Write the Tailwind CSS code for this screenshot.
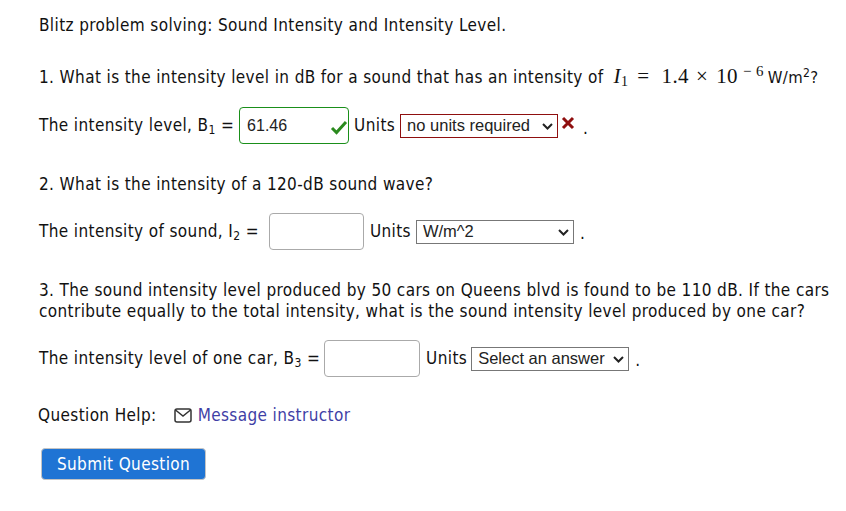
<!DOCTYPE html>
<html lang="en">
  <head>
    <meta charset="UTF-8" />
    <script src="https://cdn.jsdelivr.net/npm/@tailwindcss/browser@4"></script>
    <title>Blitz problem solving</title>
  </head>
  <body class="bg-white text-[#111] font-['DejaVu_Sans',sans-serif] font-stretch-condensed text-[17px] leading-[21px] tracking-[0.38px]">
    <div class="w-[846px] h-[511px] overflow-hidden pl-[39px] pt-[15px]">
      <p>Blitz problem solving: Sound Intensity and Intensity Level.</p>

      <!-- Question 1 -->
      <div class="mt-[30px] h-[21px] flex items-baseline whitespace-nowrap">
        <span>1. What is the intensity level in dB for a sound that has an intensity of</span>
        <span class="ml-[10px] font-['Liberation_Serif',serif] text-[21px] italic">I</span>
        <span class="font-['Liberation_Serif',serif] text-[14px] relative top-[3px]">1</span>
        <span class="ml-[9px] font-['Liberation_Serif',serif] text-[21px]">=</span>
        <span class="ml-[12px] font-['Liberation_Serif',serif] text-[21px]">1.4</span>
        <span class="ml-[7px] font-['Liberation_Serif',serif] text-[21px]">×</span>
        <span class="ml-[8px] font-['Liberation_Serif',serif] text-[21px]">10</span>
        <span class="ml-[5px] font-['Liberation_Serif',serif] text-[15px] relative -top-[7px]">− 6</span>
        <span class="ml-[4px] text-[16.5px]">W/m<sup class="text-[12px]">2</sup>?</span>
      </div>
      <div class="mt-[20px] h-[37px] flex items-center whitespace-nowrap">
        <span>The intensity level, B<sub class="text-[12px]">1</sub> =</span>
        <div class="relative ml-[5px]">
          <input value="61.46" class="w-[110px] h-[37px] border border-[#1a8f1a] rounded-[4px] pl-[7px] text-[16px] tracking-normal font-['Liberation_Sans',sans-serif] text-[#222]" />
          <svg class="absolute right-[1px] top-[12px] w-[18px] h-[16px]" viewBox="0 0 18 16"><path d="M2 9l4.500 4.500L16 3" fill="none" stroke="#2b8a1e" stroke-width="3" /></svg>
        </div>
        <span class="ml-[5px]">Units</span>
        <div class="relative ml-[5px]">
          <select class="appearance-none block w-[158px] h-[24px] border border-[#8f0f0f] pl-[6px] text-[16.5px] tracking-normal font-['Liberation_Sans',sans-serif] text-[#222]"><option>no units required</option></select>
          <svg class="absolute right-[5px] top-[9px] w-[11px] h-[7px]" viewBox="0 0 11 7"><path d="M1 1l4.500 4.500L10 1" fill="none" stroke="#222" stroke-width="2" /></svg>
        </div>
        <svg class="ml-[3px] -mt-[6px] w-[14px] h-[14px]" viewBox="0 0 14 14"><path d="M2 2l10 10M12 2L2 12" fill="none" stroke="#8f0f0f" stroke-width="3" /></svg>
        <span class="ml-[8px] mt-[5px]">.</span>
      </div>

      <!-- Question 2 -->
      <p class="mt-[30px]">2. What is the intensity of a 120-dB sound wave?</p>
      <div class="mt-[18px] h-[37px] flex items-center whitespace-nowrap">
        <span>The intensity of sound, I<sub class="text-[12px]">2</sub> =</span>
        <input class="ml-[10px] w-[95px] h-[37px] border border-[#aaa] rounded-[4px]" />
        <span class="ml-[6px]">Units</span>
        <div class="relative ml-[5px]">
          <select class="appearance-none block w-[158px] h-[24px] border border-[#777] pl-[6px] text-[16.5px] tracking-normal font-['Liberation_Sans',sans-serif] text-[#222]"><option>W/m^2</option></select>
          <svg class="absolute right-[5px] top-[9px] w-[11px] h-[7px]" viewBox="0 0 11 7"><path d="M1 1l4.500 4.500L10 1" fill="none" stroke="#222" stroke-width="2" /></svg>
        </div>
        <span class="ml-[6px] mt-[3px]">.</span>
      </div>

      <!-- Question 3 -->
      <p class="mt-[30px] whitespace-nowrap">3. The sound intensity level produced by 50 cars on Queens blvd is found to be 110 dB. If the cars<br />contribute equally to the total intensity, what is the sound intensity level produced by one car?</p>
      <div class="mt-[18px] h-[37px] flex items-center whitespace-nowrap">
        <span>The intensity level of one car, B<sub class="text-[12px]">3</sub> =</span>
        <input class="ml-[4px] w-[96px] h-[37px] border border-[#aaa] rounded-[4px]" />
        <span class="ml-[6px]">Units</span>
        <div class="relative ml-[4px]">
          <select class="appearance-none block w-[158px] h-[24px] border border-[#777] pl-[6px] text-[16.5px] tracking-normal font-['Liberation_Sans',sans-serif] text-[#222]"><option>Select an answer</option></select>
          <svg class="absolute right-[5px] top-[9px] w-[11px] h-[7px]" viewBox="0 0 11 7"><path d="M1 1l4.500 4.500L10 1" fill="none" stroke="#222" stroke-width="2" /></svg>
        </div>
        <span class="ml-[6px] mt-[3px]">.</span>
      </div>

      <!-- Help -->
      <div class="mt-[28px] -ml-[1px] flex items-center">
        <span>Question Help:</span>
        <svg class="ml-[17px] w-[18px] h-[15px]" viewBox="0 0 18 15"><rect x="1" y="1" width="16" height="13" rx="2" fill="none" stroke="#333" stroke-width="1.500" /><path d="M1.500 2l7.500 6 7.500-6" fill="none" stroke="#333" stroke-width="1.500" /></svg>
        <a class="ml-[6px] text-[#3f3fa6]">Message instructor</a>
      </div>
      <button class="mt-[22px] ml-[2px] block w-[165px] h-[32px] bg-[#1f74d4] border border-[#c4c4c4] rounded-[4px] text-white">Submit Question</button>
    </div>
  </body>
</html>
